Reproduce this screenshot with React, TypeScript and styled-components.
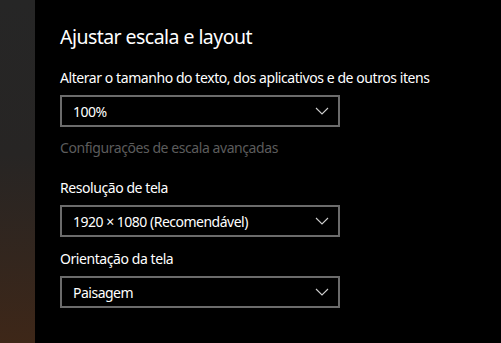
import React from 'react';
import styled, { createGlobalStyle } from 'styled-components';

const GlobalStyle = createGlobalStyle`
  html, body {
    margin: 0;
    padding: 0;
    background: #000000;
  }
`;

const Shell = styled.div`
  display: flex;
  width: 501px;
  height: 343px;
  overflow: hidden;
  background: #000000;
  font-family: "Noto Sans", "Open Sans", sans-serif;
  color: #ffffff;
`;

const Backdrop = styled.div`
  width: 35px;
  flex-shrink: 0;
  background: linear-gradient(180deg, #262626 0%, #272524 45%, #33261e 75%, #3e2718 100%);
`;

const Content = styled.main`
  flex: 1;
  display: flex;
  flex-direction: column;
  padding: 24px 0 0 25px;
`;

const Title = styled.h1`
  margin: 0 0 18px;
  font-size: 19.5px;
  font-weight: 400;
  line-height: 26px;
  letter-spacing: -0.55px;
`;

const Label = styled.div<{ $muted?: boolean; $gap?: number }>`
  font-size: 14px;
  line-height: 20px;
  letter-spacing: -0.43px;
  margin-bottom: ${(p) => p.$gap ?? 7}px;
  color: ${(p) => (p.$muted ? '#5c5c5c' : '#ffffff')};
`;

const Select = styled.div<{ $gap?: number }>`
  box-sizing: border-box;
  display: flex;
  align-items: center;
  justify-content: space-between;
  width: 280px;
  height: 32px;
  padding: 0 9px 0 11px;
  border: 2px solid #6b6b6b;
  font-size: 14px;
  letter-spacing: -0.5px;
  margin-bottom: ${(p) => p.$gap ?? 12}px;
`;

const Group = styled.section`
  display: flex;
  flex-direction: column;
`;

const Chevron = () => (
  <svg width="14" height="8" viewBox="0 0 14 8">
    <path d="M1 1 L7 7 L13 1" fill="none" stroke="#cfcfcf" strokeWidth="1.1" />
  </svg>
);

const Dropdown: React.FC<{ value: string; gap?: number }> = ({ value, gap }) => (
  <Select $gap={gap}>
    <span>{value}</span>
    <Chevron />
  </Select>
);

export default function App() {
  return (
    <>
      <GlobalStyle />
      <Shell>
        <Backdrop />
        <Content>
          <Title>Ajustar escala e layout</Title>
          <Group>
            <Label>Alterar o tamanho do texto, dos aplicativos e de outros itens</Label>
            <Dropdown value="100%" gap={11} />
            <Label $muted $gap={20}>Configurações de escala avançadas</Label>
          </Group>
          <Group>
            <Label>Resolução de tela</Label>
            <Dropdown value="1920 × 1080 (Recomendável)" />
          </Group>
          <Group>
            <Label>Orientação da tela</Label>
            <Dropdown value="Paisagem" />
          </Group>
        </Content>
      </Shell>
    </>
  );
}
